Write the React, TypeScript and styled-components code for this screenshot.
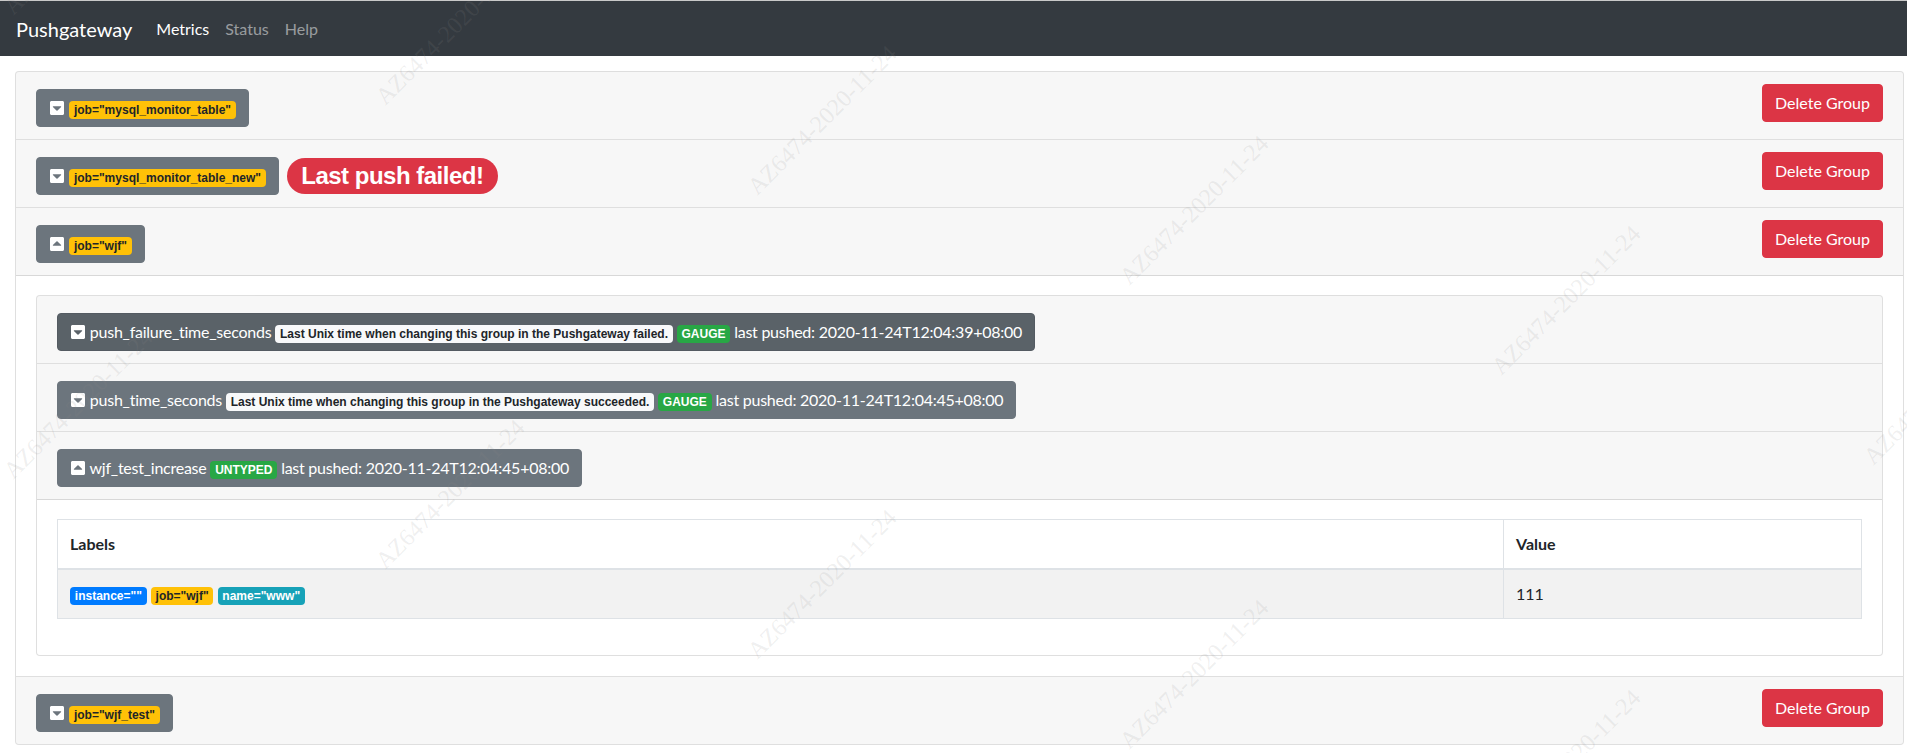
import React from 'react';
import styled, { createGlobalStyle } from 'styled-components';
import { FaCaretSquareDown, FaCaretSquareUp } from 'react-icons/fa';

const GlobalStyle = createGlobalStyle`
  * {
    box-sizing: border-box;
  }

  body {
    margin: 0;
    background: #fff;
    color: #212529;
    font-family: Lato, 'Noto Sans', sans-serif;
    font-size: 16px;
    line-height: 1.5;
  }
`;

type Variant = 'warning' | 'danger' | 'light' | 'success' | 'primary' | 'info';

const badgeColors: Record<Variant, [string, string]> = {
  warning: ['#ffc107', '#212529'],
  danger: ['#dc3545', '#fff'],
  light: ['#f8f9fa', '#212529'],
  success: ['#28a745', '#fff'],
  primary: ['#007bff', '#fff'],
  info: ['#17a2b8', '#fff'],
};

const Page = styled.div`
  position: relative;
  min-height: 753px;
  overflow: hidden;
`;

const Navbar = styled.nav`
  display: flex;
  align-items: center;
  height: 56px;
  padding: 0 16px;
  background: #343a40;
  border-top: 1px solid #c9c9c9;
`;

const Brand = styled.a`
  margin-right: 16px;
  font-size: 20px;
  line-height: 30px;
  color: #fff;
  text-decoration: none;
`;

const NavLink = styled.a<{ $active?: boolean }>`
  padding: 8px;
  color: ${(p) => (p.$active ? '#fff' : 'rgba(255, 255, 255, 0.5)')};
  text-decoration: none;
`;

const Main = styled.main`
  margin: 15px 3px 0 15px;
`;

const Accordion = styled.div`
  display: flex;
  flex-direction: column;
`;

const GroupCard = styled.div`
  display: flex;
  flex-direction: column;
  background: #fff;
  border: 1px solid rgba(0, 0, 0, 0.125);
  border-radius: 4px;
  overflow: hidden;

  &:not(:last-of-type) {
    border-bottom: 0;
    border-bottom-left-radius: 0;
    border-bottom-right-radius: 0;
  }

  &:not(:first-of-type) {
    border-top-left-radius: 0;
    border-top-right-radius: 0;
  }
`;

const CardHeader = styled.div`
  display: flex;
  justify-content: space-between;
  align-items: flex-start;
  margin-bottom: -1px;
  padding: 12px 20px;
  background: rgba(0, 0, 0, 0.03);
  border-bottom: 1px solid rgba(0, 0, 0, 0.125);
`;

const HeaderLeft = styled.div`
  display: flex;
  align-items: center;
  gap: 8px;
  padding-top: 5px;
`;

const CardBody = styled.div`
  padding: 20px;
`;

const Button = styled.button<{
  $variant: 'secondary' | 'danger';
  $hover?: boolean;
  $tight?: boolean;
}>`
  display: inline-block;
  padding: 6px 12px;
  font-family: inherit;
  font-size: 16px;
  line-height: 1.5;
  letter-spacing: ${(p) => (p.$tight ? '-0.25px' : 'normal')};
  color: #fff;
  text-align: left;
  white-space: nowrap;
  border: 1px solid;
  border-radius: 4px;
  cursor: pointer;
  background: ${(p) =>
    p.$variant === 'danger' ? '#dc3545' : p.$hover ? '#5a6268' : '#6c757d'};
  border-color: ${(p) =>
    p.$variant === 'danger' ? '#dc3545' : p.$hover ? '#545b62' : '#6c757d'};
`;

const Icon = styled.span`
  display: inline-block;

  svg {
    width: 1em;
    height: 1em;
    vertical-align: -0.125em;
  }
`;

const Badge = styled.span<{ $variant: Variant }>`
  display: inline-block;
  padding: 0.25em 0.4em;
  font-family: 'Liberation Sans', Arial, sans-serif;
  font-size: 12px;
  font-weight: 700;
  line-height: 1;
  letter-spacing: normal;
  white-space: nowrap;
  vertical-align: baseline;
  border-radius: 4px;
  background: ${(p) => badgeColors[p.$variant][0]};
  color: ${(p) => badgeColors[p.$variant][1]};
`;

const PillBadge = styled(Badge)`
  padding: 6px 14.4px;
  font-size: 24px;
  letter-spacing: -0.5px;
  border-radius: 160px;
`;

const Table = styled.table`
  width: 100%;
  margin-bottom: 16px;
  border-collapse: collapse;
  border: 1px solid #dee2e6;
  color: #212529;
`;

const Th = styled.th<{ $width?: string }>`
  width: ${(p) => p.$width || 'auto'};
  padding: 12px;
  text-align: left;
  font-weight: 700;
  vertical-align: bottom;
  border: 1px solid #dee2e6;
  border-bottom-width: 2px;
`;

const StripedRow = styled.tr`
  background: rgba(0, 0, 0, 0.05);
`;

const Td = styled.td`
  padding: 12px;
  vertical-align: top;
  border: 1px solid #dee2e6;
`;

const WatermarkLayer = styled.div`
  position: absolute;
  inset: 0;
  pointer-events: none;
  overflow: hidden;
`;

const Mark = styled.span`
  position: absolute;
  font-family: 'Liberation Serif', serif;
  font-size: 24px;
  line-height: 1;
  white-space: nowrap;
  color: rgba(140, 140, 140, 0.14);
  transform: translate(-50%, -50%) rotate(-45deg);
`;

type Metric = {
  name: string;
  help?: string;
  type: string;
  pushed: string;
  hover?: boolean;
  open?: boolean;
  labels?: { text: string; variant: Variant }[];
  value?: string;
};

type Group = {
  job: string;
  failed?: boolean;
  open?: boolean;
  metrics?: Metric[];
};

const groups: Group[] = [
  { job: 'mysql_monitor_table' },
  { job: 'mysql_monitor_table_new', failed: true },
  {
    job: 'wjf',
    open: true,
    metrics: [
      {
        name: 'push_failure_time_seconds',
        help: 'Last Unix time when changing this group in the Pushgateway failed.',
        type: 'GAUGE',
        pushed: '2020-11-24T12:04:39+08:00',
        hover: true,
      },
      {
        name: 'push_time_seconds',
        help: 'Last Unix time when changing this group in the Pushgateway succeeded.',
        type: 'GAUGE',
        pushed: '2020-11-24T12:04:45+08:00',
      },
      {
        name: 'wjf_test_increase',
        type: 'UNTYPED',
        pushed: '2020-11-24T12:04:45+08:00',
        open: true,
        labels: [
          { text: 'instance=""', variant: 'primary' },
          { text: 'job="wjf"', variant: 'warning' },
          { text: 'name="www"', variant: 'info' },
        ],
        value: '111',
      },
    ],
  },
  { job: 'wjf_test' },
];

function Toggle({ open }: { open?: boolean }) {
  return <Icon>{open ? <FaCaretSquareUp /> : <FaCaretSquareDown />}</Icon>;
}

function MetricCard({ metric }: { metric: Metric }) {
  return (
    <GroupCard>
      <CardHeader>
        <HeaderLeft>
          <Button $variant="secondary" $hover={metric.hover} $tight>
            <Toggle open={metric.open} /> {metric.name}{' '}
            {metric.help && (
              <>
                <Badge $variant="light">{metric.help}</Badge>{' '}
              </>
            )}
            <Badge $variant="success">{metric.type}</Badge> last pushed: {metric.pushed}
          </Button>
        </HeaderLeft>
      </CardHeader>
      {metric.open && (
        <CardBody>
          <Table>
            <thead>
              <tr>
                <Th>Labels</Th>
                <Th $width="358px">Value</Th>
              </tr>
            </thead>
            <tbody>
              <StripedRow>
                <Td>
                  {metric.labels?.map((l, i) => (
                    <React.Fragment key={l.text}>
                      {i > 0 && ' '}
                      <Badge $variant={l.variant}>{l.text}</Badge>
                    </React.Fragment>
                  ))}
                </Td>
                <Td>{metric.value}</Td>
              </StripedRow>
            </tbody>
          </Table>
        </CardBody>
      )}
    </GroupCard>
  );
}

function Watermark() {
  const marks: { x: number; y: number }[] = [];
  for (let i = -4; i <= 4; i++) {
    for (let j = -2; j <= 2; j++) {
      const x = 822 + 372 * i;
      const y = 120 + 90 * i + 464 * j;
      if (x > -150 && x < 2060 && y > -150 && y < 900) marks.push({ x, y });
    }
  }
  return (
    <WatermarkLayer>
      {marks.map((m) => (
        <Mark key={`${m.x}-${m.y}`} style={{ left: m.x, top: m.y }}>
          AZ6474-2020-11-24
        </Mark>
      ))}
    </WatermarkLayer>
  );
}

export default function App() {
  return (
    <Page>
      <GlobalStyle />
      <Navbar>
        <Brand>Pushgateway</Brand>
        <NavLink $active>Metrics</NavLink>
        <NavLink>Status</NavLink>
        <NavLink>Help</NavLink>
      </Navbar>
      <Main>
        <Accordion>
          {groups.map((g) => (
            <GroupCard key={g.job}>
              <CardHeader>
                <HeaderLeft>
                  <Button $variant="secondary">
                    <Toggle open={g.open} /> <Badge $variant="warning">job="{g.job}"</Badge>
                  </Button>
                  {g.failed && <PillBadge $variant="danger">Last push failed!</PillBadge>}
                </HeaderLeft>
                <Button $variant="danger">Delete Group</Button>
              </CardHeader>
              {g.open && (
                <CardBody>
                  <Accordion>
                    {g.metrics?.map((m) => (
                      <MetricCard key={m.name} metric={m} />
                    ))}
                  </Accordion>
                </CardBody>
              )}
            </GroupCard>
          ))}
        </Accordion>
      </Main>
      <Watermark />
    </Page>
  );
}
